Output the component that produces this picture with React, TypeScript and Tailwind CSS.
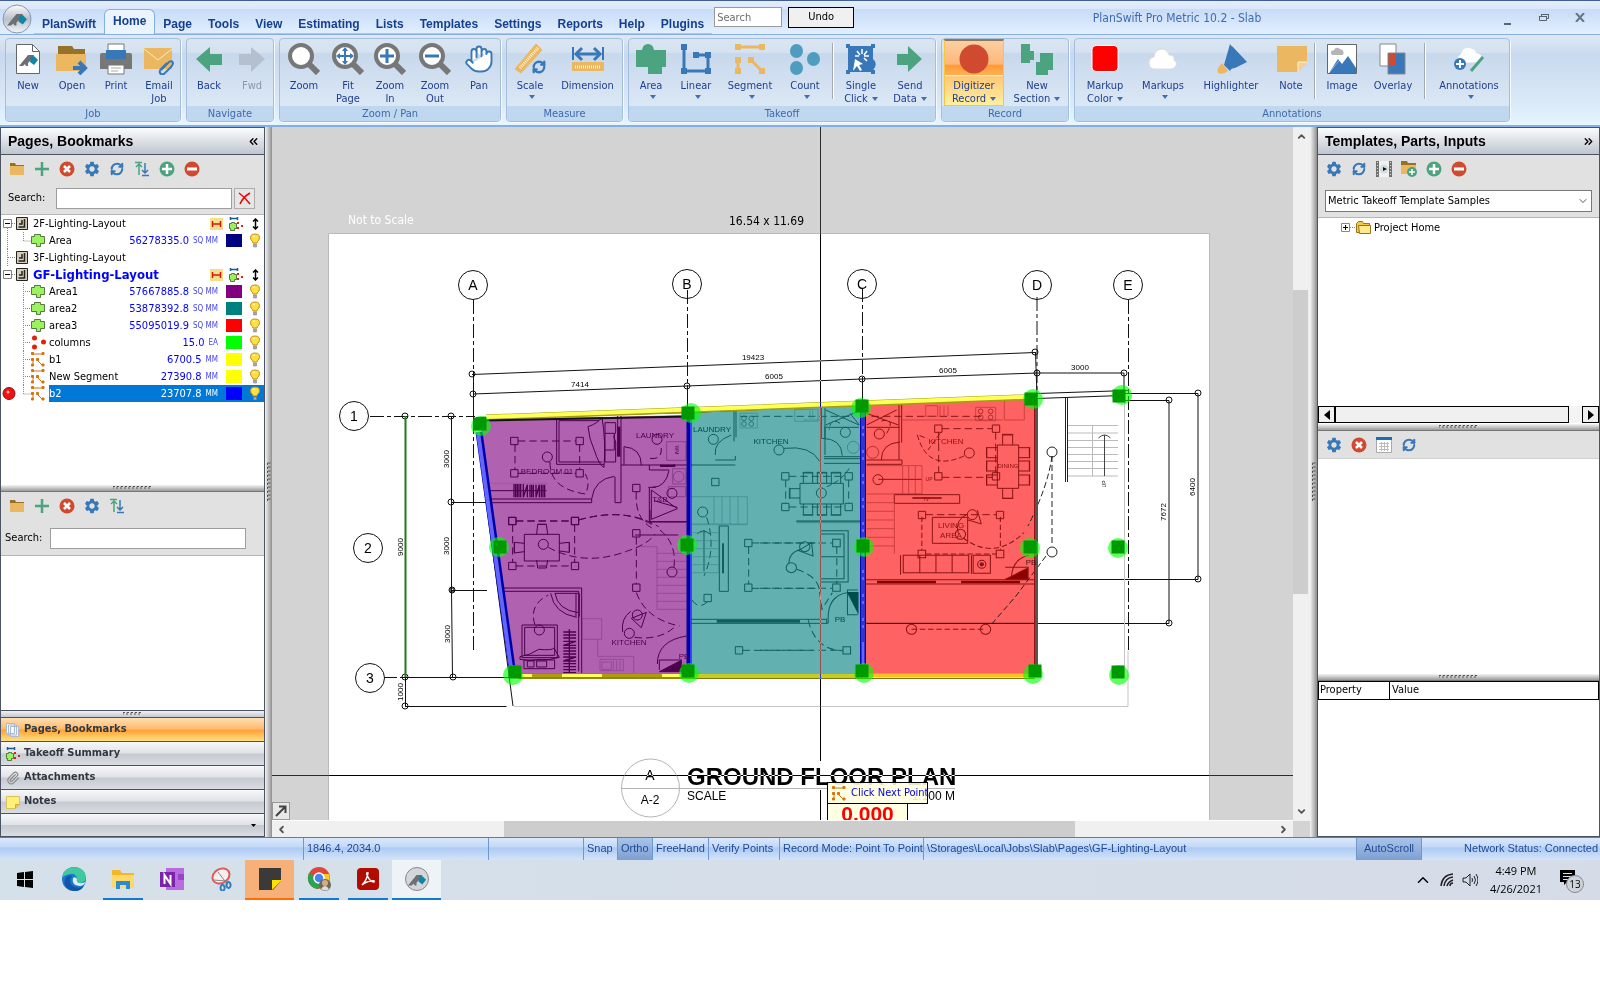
import { useState, type ReactNode } from 'react';
import { ChevronDown, ChevronLeft, ChevronRight, ChevronUp, ChevronsLeft, ChevronsRight, Hand, Paperclip, RefreshCw } from 'lucide-react';
import { MdSettings } from 'react-icons/md';
import clsx from 'clsx';

const BLUE = '#3878b8';
const GREEN = '#4ba37f';
const SAND = '#ebb761';
const GRAY = '#767776';
const RED = '#d04a30';

/* ---------- Ribbon icons ---------- */

const Logo = ({ x = 0, y = 0, s = 1 }: { x?: number; y?: number; s?: number }) => (
  <g transform={`translate(${x} ${y}) scale(${s})`}>
    <path d="M0 12 9 1h6l-1 3-5 5v3H7l-1-2-2 2z" fill="#6d6f72" />
    <path d="m15 2 4 4-4 5-4-3 1-5z" fill="#0e87a5" />
  </g>
);

const Lens = ({ children }: { children?: ReactNode }) => (
  <>
    <path d="m20 20 10 10" stroke={GRAY} strokeWidth="6" />
    <circle cx="13" cy="13" r="11" fill="#fff" stroke={GRAY} strokeWidth="4" />
    {children}
  </>
);

const ICONS: Record<string, ReactNode> = {
  New: (
    <>
      <path d="M4.500 1.500h16l7 7v22h-23z" fill="#fff" stroke="#666" />
      <path d="M20.500 1.500v7h7" fill="none" stroke="#666" />
      <Logo x={7} y={11} />
    </>
  ),
  Open: (
    <>
      <path d="M2 3h14l2 3h11v5H2z" fill="#957227" />
      <path d="M0 11h30v17H0z" fill={SAND} />
      <path d="M17 25h11m-5-6 6 6-6 6" fill="none" stroke={BLUE} strokeWidth="4" />
    </>
  ),
  Print: (
    <>
      <path d="M8 1h16v8H8z" fill="#fff" stroke={GRAY} />
      <path d="M0 12q0-2 2-2h28q2 0 2 2v14H0z" fill={GRAY} />
      <path d="M6 7h20v9H6z" fill={BLUE} />
      <path d="M8 22h16v9H8z" fill="#fff" stroke={GRAY} />
      <path d="M11 25h10m-10 3h7" stroke="#aaa" />
    </>
  ),
  'Email Job': (
    <>
      <path d="M1 5h28v21H1z" fill={SAND} />
      <path d="m1 6 14 11L29 6" fill="none" stroke="#fbe9ca" />
      <path d="m18 27 8-8q3-2 4 1 0 2-2 4l-7 7q-3 1-4-1-1-3 2-5l5-5" fill="none" stroke={BLUE} strokeWidth="2" />
    </>
  ),
  Back: <path d="M3 16 17 4v7h12v11H17v7z" fill={GREEN} />,
  Fwd: <path d="M29 16 15 4v7H3v11h12v7z" fill="#b4c0d0" />,
  Zoom: <Lens />,
  'Fit Page': (
    <Lens>
      <path d="M13 6v14M6 13h14" stroke={BLUE} strokeWidth="2" />
      <path d="m13 4 3 4h-6zm0 18 3-4h-6zM4 13l4-3v6zm18 0-4-3v6z" fill={BLUE} />
    </Lens>
  ),
  'Zoom In': (
    <Lens>
      <path d="M13 6v14M6 13h14" stroke={BLUE} strokeWidth="3" />
    </Lens>
  ),
  'Zoom Out': (
    <Lens>
      <path d="M6 13h14" stroke={BLUE} strokeWidth="3" />
    </Lens>
  ),
  Pan: <Hand width={30} height={32} x={1} fill="#fff" color={BLUE} strokeWidth={1.5} />,
  Scale: (
    <>
      <path d="M1 26 22 1l6 6L7 30z" fill={SAND} stroke={SAND} strokeLinejoin="round" />
      <path d="M6 25 24 5" stroke="#fff3d8" strokeWidth="3" strokeDasharray="1 1" />
      <RefreshCw x={18} y={17} width={14} height={14} color={BLUE} strokeWidth={4} />
    </>
  ),
  Dimension: (
    <>
      <path d="M1 4v13M31 4v13" stroke={BLUE} strokeWidth="2" />
      <path d="M6 11h20" stroke={BLUE} strokeWidth="3" />
      <path d="m10 5-6 6 6 6m12-12 6 6-6 6" fill="none" stroke={BLUE} strokeWidth="3" />
      <path d="M0 19h32v9H0z" fill={SAND} />
      <path d="M3 24h26" stroke="#fff3d8" strokeWidth="3" strokeDasharray="1 1" />
    </>
  ),
  Area: <path d="M1 7h6q1-6 6-6t6 6h12v17h-4v7H13v-7H1z" fill={GREEN} />,
  Linear: (
    <>
      <path d="M4 4v24h24V12H15" fill="none" stroke={BLUE} strokeWidth="3" />
      <path d="M1 1h6v6H1zM1 25h6v6H1zM25 25h6v6h-6zM25 9h6v6h-6zM13 9h6v6h-6z" fill={BLUE} />
    </>
  ),
  Segment: (
    <>
      <path d="M4 4h24M4 18v10M17 17l12 12" fill="none" stroke={SAND} strokeWidth="3" />
      <path d="M1 1h6v6H1zM25 1h6v6h-6zM1 14h6v6H1zM1 25h6v6H1zM14 14h6v6h-6zM25 25h6v6h-6z" fill={SAND} />
    </>
  ),
  Count: <path d="M14 8A6.500 7 0 1 1 1 8a6.500 7 0 1 1 13 0m0 17a6.500 7 0 1 1-13 0 6.500 7 0 1 1 13 0m17-9a6.500 7 0 1 1-13 0 6.500 7 0 1 1 13 0" fill="#4e9dc0" />,
  'Single Click': (
    <>
      <path d="M3 3h25v13q4 3 2 8l-3 5H3z" fill={BLUE} />
      <path d="M1 1h4v4H1zM26 1h4v4h-4zM1 27h4v4H1zM26 27h4v4h-4z" fill={BLUE} />
      <path d="m8 28 2-12 8 5-4 1 3 5-2 1-3-5z" fill="#fff" />
      <path d="M17 6v5m-5-3 3 4m7-4-3 4m5 1h-5m-9 0h4m5 2 3 3" stroke="#fff" strokeWidth="1.500" />
    </>
  ),
  'Send Data': <path d="M3 11h11V3l14 13-14 13v-7H3z" fill={GREEN} />,
  'Digitizer Record': <circle cx="16" cy="16" r="14.500" fill={RED} />,
  'New Section': (
    <>
      <path d="M0 1h9v7h4v9H9v3H0z" fill={GREEN} />
      <path d="M19 10h13v17h-5v5H15V19h4z" fill={GREEN} />
    </>
  ),
  'Markup Color': <rect x="3" y="2.500" width="26" height="26" rx="4" fill="#f00" stroke="#fff" />,
  Markups: <path d="M8 26q-6 0-6-6 0-5 5-6 1-8 8-8 5 0 7 6 6 0 5 5 4 3 2 6-2 3-5 3z" fill="#fff" stroke="#dcdcdc" />,
  Highlighter: (
    <>
      <path d="M15 1q1 2 3 3l14 15-12 6q-4 0-5 3l-6-6z" fill={BLUE} />
      <path d="m7 20 6 8q-5 4-10 2-2-4 4-10" fill={SAND} />
    </>
  ),
  Note: (
    <>
      <path d="M2 3h30v16l-9 10H2z" fill={SAND} />
      <path d="M23 29V19h9" fill="#f2d096" stroke="#fdf1dc" />
    </>
  ),
  Image: (
    <>
      <path d="M1.500 1.500h29v29h-29z" fill="#fff" stroke="#666" />
      <path d="M6 12q-3-4 2-5 2-4 6-1 5 1 3 6z" fill="#b5b5b5" />
      <path d="m3 30 9-14 4 5 6-8 8 12v5z" fill={BLUE} />
      <path d="m3 30 14-17" stroke="#fff" strokeOpacity=".4" />
    </>
  ),
  Overlay: (
    <>
      <path d="M3 1h16v22H3z" fill="#fff" stroke="#888" />
      <path d="M11 10h17v21H11z" fill={BLUE} stroke="#888" />
      <path d="M11.500 10.500h7v12h-7z" fill={RED} />
    </>
  ),
  Annotations: (
    <>
      <path d="M7 20q-5-5 1-9 3-9 11-5 3 0 4 4 8 1 5 9z" fill="#fff" />
      <path d="M30 14 18 28" stroke={GREEN} strokeWidth="3" />
      <circle cx="7" cy="21" r="6" fill={BLUE} />
      <path d="M7 17v8m-4-4h8" stroke="#fff" strokeWidth="2" />
    </>
  ),
};

type Tool = { id: string; w: string; lines?: string[]; menu?: boolean; off?: boolean; on?: boolean; sep?: boolean };

const GROUPS: { name: string; tools: Tool[] }[] = [
  {
    name: 'Job',
    tools: [
      { id: 'New', w: 'w-11' },
      { id: 'Open', w: 'w-11' },
      { id: 'Print', w: 'w-11' },
      { id: 'Email Job', w: 'w-[42px]', lines: ['Email', 'Job'] },
    ],
  },
  { name: 'Navigate', tools: [{ id: 'Back', w: 'w-11' }, { id: 'Fwd', w: 'w-[42px]', off: true }] },
  {
    name: 'Zoom / Pan',
    tools: [
      { id: 'Zoom', w: 'w-12' },
      { id: 'Fit Page', w: 'w-10', lines: ['Fit', 'Page'] },
      { id: 'Zoom In', w: 'w-11', lines: ['Zoom', 'In'] },
      { id: 'Zoom Out', w: 'w-[46px]', lines: ['Zoom', 'Out'] },
      { id: 'Pan', w: 'w-[42px]' },
    ],
  },
  { name: 'Measure', tools: [{ id: 'Scale', w: 'w-[46px]', menu: true }, { id: 'Dimension', w: 'w-[69px]' }] },
  {
    name: 'Takeoff',
    tools: [
      { id: 'Area', w: 'w-11', menu: true },
      { id: 'Linear', w: 'w-[46px]', menu: true },
      { id: 'Segment', w: 'w-[62px]', menu: true },
      { id: 'Count', w: 'w-12', menu: true },
      { id: 'Single Click', w: 'w-12', lines: ['Single', 'Click'], menu: true, sep: true },
      { id: 'Send Data', w: 'w-[50px]', lines: ['Send', 'Data'], menu: true },
    ],
  },
  {
    name: 'Record',
    tools: [
      { id: 'Digitizer Record', w: 'w-16', lines: ['Digitizer', 'Record'], menu: true, on: true },
      { id: 'New Section', w: 'w-[62px]', lines: ['New', 'Section'], menu: true },
    ],
  },
  {
    name: 'Annotations',
    tools: [
      { id: 'Markup Color', w: 'w-[60px]', lines: ['Markup', 'Color'], menu: true },
      { id: 'Markups', w: 'w-14', menu: true },
      { id: 'Highlighter', w: 'w-20' },
      { id: 'Note', w: 'w-10' },
      { id: 'Image', w: 'w-[46px]', sep: true },
      { id: 'Overlay', w: 'w-14' },
      { id: 'Annotations', w: 'w-20', menu: true, sep: true },
    ],
  },
];

const Caret = () => (
  <svg className="ml-1 inline-block" width="6" height="4" viewBox="0 0 6 4">
    <path d="M0 0h6L3 4z" fill="#3f6fae" />
  </svg>
);

function ToolButton({ tool }: { tool: Tool }) {
  const lines = tool.lines ?? [tool.id];
  return (
    <>
      {tool.sep && <div className="mx-[3px] mt-1 h-14 w-0.5 border-r border-white bg-[#a5aab2]" />}
      <div className={clsx('flex shrink-0 justify-center', tool.w)}>
        <button
          className={clsx(
            'flex h-[67px] flex-col items-center whitespace-nowrap text-[11px] leading-[13px]',
            tool.on
              ? 'w-[60px] border border-t-2 border-[#f7c63c] border-t-[#8e7a58] bg-[linear-gradient(#fbcfa2_0%,#fdb87a_36%,#ff9a35_38%,#ffb054_53%,#fff0c0_54%,#fdc878_56%,#fff0a0_100%)] pt-0.5'
              : 'w-full pt-1',
            tool.off ? 'text-[#8d97a6]' : 'text-[#1e3f8f]',
          )}
        >
          <svg width="32" height="32" viewBox="0 0 32 32" className="mb-1 shrink-0" aria-hidden>
            {ICONS[tool.id]}
          </svg>
          <span>{lines[0]}</span>
          {(lines[1] || tool.menu) && (
            <span className={clsx('flex items-center', !lines[1] && 'h-2.5')}>
              {lines[1]}
              {tool.menu && <Caret />}
            </span>
          )}
        </button>
      </div>
    </>
  );
}

const TABS = ['PlanSwift', 'Home', 'Page', 'Tools', 'View', 'Estimating', 'Lists', 'Templates', 'Settings', 'Reports', 'Help', 'Plugins'];

function Ribbon() {
  const [tab, setTab] = useState('Home');
  return (
    <header className="border-t border-[#3f5f94]">
      <div className="flex h-[33px] items-stretch bg-[linear-gradient(#e4edfb_0%,#dbe7fa_24%,#c8dcf7_26%,#e2efff_100%)]">
        <div className="flex w-[34px] items-end justify-center">
          <svg width="30" height="30" viewBox="0 0 30 30">
            <defs>
              <linearGradient id="orb" x2="0" y2="1">
                <stop offset="0" stopColor="#fdfdfe" />
                <stop offset=".5" stopColor="#b9c0cb" />
                <stop offset="1" stopColor="#f3f6fa" />
              </linearGradient>
            </defs>
            <circle cx="15" cy="15" r="14" fill="url(#orb)" stroke="#8496b5" />
            <Logo x={5} y={9} s={1.05} />
          </svg>
        </div>
        <nav className="flex items-end font-['Liberation_Sans',Arial,sans-serif] text-[12px] font-bold text-[#153f8f]">
          {TABS.map((t) => (
            <button
              key={t}
              onClick={() => setTab(t)}
              className={clsx(
                'px-2',
                t === tab ? 'h-[25px] rounded-t-md border border-b-0 border-[#7fb0ea] bg-[#eaf3fe] pb-0.5' : 'h-5 border-b border-[#a9c6ee]',
              )}
            >
              {t}
            </button>
          ))}
        </nav>
        <input aria-label="Search" placeholder="Search" className="ml-0.5 mt-1.5 h-5 w-[68px] rounded-none border border-[#9a9a9a] bg-white px-0.5 text-[11px] placeholder:text-[#6d6d6d]" />
        <button className="ml-1.5 mt-1.5 h-[21px] w-[66px] border border-black bg-[#f0f0f0] text-[11px] text-black">Undo</button>
        <h1 className="flex-1 self-center text-center text-[12px] text-[#3e6bb0]">PlanSwift Pro Metric 10.2 - Slab</h1>
        <div className="mr-3 flex items-center gap-5 text-[#586473]">
          <button aria-label="Minimize" className="flex h-4 w-4 items-end justify-center">
            <svg width="10" height="8"><path d="M1 5h7v2H1z" fill="#586473" /></svg>
          </button>
          <button aria-label="Restore" className="flex h-4 w-4 items-center justify-center">
            <svg width="10" height="9"><path d="M2.500 3V1.500h7v4H8M.5 3.500h7v4h-7z" fill="none" stroke="#586473" /><path d="M2 1h8v1H2zM0 3h8v1H0z" fill="#586473" /></svg>
          </button>
          <button aria-label="Close" className="flex h-4 w-4 items-center justify-center">
            <svg width="10" height="9"><path d="m1 0 8 9M9 0 1 9" stroke="#66758b" strokeWidth="2" /></svg>
          </button>
        </div>
      </div>
      <div className="flex gap-[5px] border-b-2 border-t border-[#86aee2] bg-[linear-gradient(#dfe9f5_0%,#c9d9ee_22%,#dcebf9_80%,#e4f6ff_100%)] px-[5px] pb-[3px] pt-[3px]">
        {GROUPS.map((g) => (
          <section key={g.name} className="rounded border border-[#a3bfdd] bg-[linear-gradient(#dae5f2_0%,#d6e2f0_16%,#c8d8ec_18%,#dae7f5_80%)] shadow-[1px_1px_0_#f3f9ff]">
            <div className="flex">
              {g.tools.map((t) => (
                <ToolButton key={t.id} tool={t} />
              ))}
            </div>
            <h2 className="h-[15px] rounded-b bg-[#c0d7f0] text-center text-[11px] leading-[15px] text-[#3e6aaa]">{g.name}</h2>
          </section>
        ))}
      </div>
    </header>
  );
}

/* ---------- Small toolbar icons ---------- */

type MiniName = 'folder' | 'plus' | 'delete' | 'gear' | 'sync' | 'sort' | 'add' | 'remove' | 'film' | 'folderAdd' | 'sheet';

const MINI: Record<MiniName, ReactNode> = {
  folder: (
    <>
      <path d="M1 2h5l1 2h8v3H1z" fill="#957227" />
      <path d="M1 5h14v9H1z" fill={SAND} />
    </>
  ),
  plus: <path d="M8 1v14M1 8h14" stroke={GREEN} strokeWidth="2.500" />,
  delete: (
    <>
      <circle cx="8" cy="8" r="7.500" fill={RED} />
      <path d="m5 5 6 6m0-6-6 6" stroke="#fff" strokeWidth="2.500" />
    </>
  ),
  gear: <MdSettings size={18} x={-1} y={-1} color={BLUE} />,
  sync: <RefreshCw width={14} height={14} x={1} y={1} color={BLUE} strokeWidth={3.5} />,
  sort: (
    <>
      <path d="M1 1.500h7M5 14V4M2 6l3-3 3 3" fill="none" stroke={GREEN} strokeWidth="1.500" />
      <path d="M8 14.500h7M11 2v10M8 9l3 3 3-3" fill="none" stroke={BLUE} strokeWidth="1.500" />
    </>
  ),
  add: (
    <>
      <circle cx="8" cy="8" r="7.500" fill={GREEN} />
      <path d="M8 3v10M3 8h10" stroke="#fff" strokeWidth="2.500" />
    </>
  ),
  remove: (
    <>
      <circle cx="8" cy="8" r="7.500" fill={RED} />
      <path d="M3 8h10" stroke="#fff" strokeWidth="3" />
    </>
  ),
  film: (
    <>
      <path d="M0 0h16v16H0z" fill="#707070" />
      <path d="M3 0h10v16H3z" fill="#f1f1f1" />
      <path d="M1.500 1v15m13-15v15" stroke="#ddd" strokeDasharray="1 2" />
      <circle cx="8" cy="8" r="4.500" fill="#d5dce0" />
      <path d="m7 6 4 2-4 2z" fill="#111" />
    </>
  ),
  folderAdd: (
    <>
      <path d="M0 0h6l1 2h8v2H0z" fill="#957227" />
      <path d="M0 4h15v9H0z" fill={SAND} />
      <circle cx="11" cy="11" r="5" fill={GREEN} />
      <path d="M11 8v6M8 11h6" stroke="#fff" strokeWidth="1.500" />
    </>
  ),
  sheet: (
    <>
      <path d="M.5.5h15v15H.5z" fill="#fff" stroke="#aaa" />
      <path d="M0 0h16v3H0z" fill="#1f6db5" />
      <path d="M3 6.500h10M3 9.500h10M3 12.500h10M5.500 5v9m3-9v9m3-9v9" stroke="#bbb" />
    </>
  ),
};

function MiniBar({ names }: { names: MiniName[] }) {
  return (
    <div className="flex h-[27px] items-center gap-[9px] px-2">
      {names.map((n) => (
        <button key={n} aria-label={n} className="h-4 w-4">
          <svg width="16" height="16" viewBox="0 0 16 16">{MINI[n]}</svg>
        </button>
      ))}
    </div>
  );
}

const Grip = ({ dots = 10 }: { dots?: number }) => (
  <svg width={dots * 4} height="4" className="block">
    {Array.from({ length: dots }, (_, i) => (
      <path key={i} d={`M${i * 4} 3V0.500h2`} fill="none" stroke="#555" />
    ))}
  </svg>
);

const HSplit = () => (
  <div className="flex h-[7px] shrink-0 items-center justify-center border-b border-[#777] bg-[linear-gradient(#f4f4f4,#9a9a9a)]">
    <Grip />
  </div>
);

const VSplit = () => (
  <div className="flex w-[7px] shrink-0 items-center justify-center bg-[linear-gradient(90deg,#f4f4f4,#8f8f8f)]">
    <svg width="4" height="40">
      {Array.from({ length: 10 }, (_, i) => (
        <path key={i} d={`M0.500 ${i * 4 + 3}v-2h3`} fill="none" stroke="#555" />
      ))}
    </svg>
  </div>
);

function PanelTitle({ title, children }: { title: string; children: ReactNode }) {
  return (
    <div className="flex h-7 shrink-0 items-center justify-between border-y border-[#4c5361] bg-[linear-gradient(#fbfcfd,#bfc5cf)] pl-[7px] pr-1">
      <h2 className="font-['Liberation_Sans',Arial,sans-serif] text-[14px] font-bold text-black">{title}</h2>
      <button aria-label={`Collapse ${title}`}>{children}</button>
    </div>
  );
}

/* ---------- Left tree ---------- */

const PageGlyph = () => (
  <>
    <path d="M15.500 2.500h11v12h-11z" fill="#d8cdb8" stroke="#222" />
    <path d="M23.500 4v8h-6M21 5v4h-3" fill="none" stroke="#222" strokeWidth="1.500" />
  </>
);
const AreaGlyph = () => <path d="M30.500 4.500h3v-2h6v2h4v7h-4v3h-4v-3h-5z" fill="#99f25e" stroke="#55793e" />;
const SegGlyph = ({ x = 30, y = 1 }) => (
  <g transform={`translate(${x} ${y})`} fill="#d8720c" stroke="#d8720c">
    <path d="M2 2h10M2 8v5m4-5 5 5" />
    <path d="M.5.5h2v2h-2zM11 .5h2v2h-2zM.5 6.500h2v2h-2zM.5 12h2v2h-2zM5.500 6.500h2v2h-2zM11 12h2v2h-2z" />
  </g>
);
const CountGlyph = () => <path d="M36 4a2.500 2.500 0 1 1-5 0 2.500 2.500 0 1 1 5 0m0 9a2.500 2.500 0 1 1-5 0 2.500 2.500 0 1 1 5 0m9-5a2.500 2.500 0 1 1-5 0 2.500 2.500 0 1 1 5 0" fill="#de2408" />;

const Bulb = () => (
  <svg width="12" height="15" viewBox="0 0 12 15">
    <path d="M4 10q0-2-2-3-2-6 4-6t4 6q-2 1-2 3z" fill="#ffe03c" stroke="#c58f16" />
    <path d="M4.500 11h3v3h-3z" fill="#aaa" stroke="#777" strokeWidth=".5" />
    <path d="M4 4q0-1 2-1" stroke="#fff" fill="none" />
  </svg>
);

const SummaryGlyph = () => (
  <svg width="14" height="14" viewBox="0 0 14 14">
    <path d="M1 1.500h8M1.500 0v3m7-3v3" stroke="#165b9a" strokeWidth="1.500" />
    <path d="M.5 6.500h2v-1h3v1h2v5h-2v2h-4v-2h-1z" fill="#99f25e" stroke="#55793e" />
    <path d="M8 5h2v2H8zM8 10h2v2H8zM12 8h2v2h-2z" fill="#de2408" />
  </svg>
);

type Row = { kind: 'page' | 'area' | 'count' | 'segment'; name: string; value?: string; unit?: string; color?: string; tools?: boolean; current?: boolean; last?: boolean; selected?: boolean };

const ROWS: Row[] = [
  { kind: 'page', name: '2F-Lighting-Layout', tools: true },
  { kind: 'area', name: 'Area', value: '56278335.0', unit: 'SQ MM', color: 'bg-[#000080]', last: true },
  { kind: 'page', name: '3F-Lighting-Layout' },
  { kind: 'page', name: 'GF-Lighting-Layout', tools: true, current: true },
  { kind: 'area', name: 'Area1', value: '57667885.8', unit: 'SQ MM', color: 'bg-[#800080]' },
  { kind: 'area', name: 'area2', value: '53878392.8', unit: 'SQ MM', color: 'bg-[#008080]' },
  { kind: 'area', name: 'area3', value: '55095019.9', unit: 'SQ MM', color: 'bg-[#ff0000]' },
  { kind: 'count', name: 'columns', value: '15.0', unit: 'EA', color: 'bg-[#00ff00]' },
  { kind: 'segment', name: 'b1', value: '6700.5', unit: 'MM', color: 'bg-[#ffff00]' },
  { kind: 'segment', name: 'New Segment', value: '27390.8', unit: 'MM', color: 'bg-[#ffff00]' },
  { kind: 'segment', name: 'b2', value: '23707.8', unit: 'MM', color: 'bg-[#0000ff]', last: true, selected: true },
];

function TreeRow({ row, index }: { row: Row; index: number }) {
  const page = row.kind === 'page';
  return (
    <li className="flex h-[17px] items-center text-[11px] leading-[17px] text-black">
      <svg width={page ? 32 : 48} height="17" className="shrink-0">
        <g stroke="#888" strokeDasharray="1 1">
          {index < 3 && <path d={index === 0 ? 'M6.500 9v8' : 'M6.500 0v17'} />}
          {page ? <path d="M7 8.500h8" /> : <path d={row.last ? 'M22.500 0v9h8' : 'M22.500 0v17M22 8.500h8'} fill="none" />}
        </g>
        {page && row.tools && (
          <>
            <path d="M2.500 4.500h8v8h-8z" fill="#fff" stroke="#808080" />
            <path d="M4 8.500h5" stroke="#000" />
          </>
        )}
        {row.kind === 'page' && <PageGlyph />}
        {row.kind === 'area' && <AreaGlyph />}
        {row.kind === 'count' && <CountGlyph />}
        {row.kind === 'segment' && <SegGlyph />}
        {row.selected && (
          <>
            <circle cx="8" cy="8.500" r="6" fill="#f01010" stroke="#901010" />
            <circle cx="7" cy="7" r="1.500" fill="#ffb0b0" />
          </>
        )}
      </svg>
      <button
        className={clsx(
          'flex h-full min-w-0 flex-1 items-center justify-between pr-[3px] text-left',
          row.selected && 'bg-[#0078d7] text-white',
        )}
      >
        <span className={row.current ? 'whitespace-nowrap text-[13px] font-bold text-[#0000ff]' : 'whitespace-nowrap'}>{row.name}</span>
        {row.value && (
          <span className="flex items-center">
            <span className={row.selected ? 'text-white' : 'text-[#0000ff]'}>{row.value}</span>
            <span className={clsx('ml-1 text-[8px]', row.selected ? 'text-white' : 'text-[#4444ff]')}>{row.unit}</span>
            <i className={clsx('ml-2 h-[13px] w-4', row.color)} />
            <span className="ml-[7px]"><Bulb /></span>
          </span>
        )}
        {row.tools && (
          <span className="flex items-center gap-1.5">
            <svg width="13" height="12"><path d="M0 0h13v12H0z" fill="#f5df8a" /><path d="M2.500 3v6m8-6v6m-8-3h8" stroke="#d41a10" strokeWidth="1.500" /></svg>
            <SummaryGlyph />
            <svg width="12" height="12"><path d="M6.500 1v10M4 3.500 6.500 1 9 3.500M4 8.500 6.500 11 9 8.500" stroke="#000" fill="none" strokeWidth="1.500" /></svg>
          </span>
        )}
      </button>
    </li>
  );
}

const SECTIONS = [
  {
    name: 'Pages, Bookmarks',
    icon: (
      <svg width="14" height="14"><path d="M4.500 3.500h8v10h-8zM2.500 2h8v10h-8zM.5.5h8v10h-8z" fill="#f4f9ff" stroke="#a9bad2" /></svg>
    ),
  },
  { name: 'Takeoff Summary', icon: <SummaryGlyph /> },
  { name: 'Attachments', icon: <Paperclip size={14} color="#8a8a8a" /> },
  {
    name: 'Notes',
    icon: (
      <svg width="14" height="14"><path d="M.5 1.500h13v8l-4 4h-9z" fill="#fff07a" stroke="#d9c255" /><path d="M9.500 13.500v-4h4" fill="#f2c33c" stroke="#d9a935" /></svg>
    ),
  },
];

function LeftPanel() {
  const [section, setSection] = useState('Pages, Bookmarks');
  return (
    <aside className="flex w-[265px] shrink-0 flex-col border-x border-[#4c5361] bg-white">
      <PanelTitle title="Pages, Bookmarks">
        <ChevronsLeft size={13} strokeWidth={2.5} />
      </PanelTitle>
      <div className="border-b border-[#b5b5b5] bg-[#e1e1e1]">
        <MiniBar names={['folder', 'plus', 'delete', 'gear', 'sync', 'sort', 'add', 'remove']} />
        <div className="flex h-8 items-center pl-[7px] pr-[9px] text-[11px]">
          <label htmlFor="page-search" className="w-12">Search:</label>
          <input id="page-search" className="h-[21px] min-w-0 flex-1 rounded-none border border-[#9d9d9d] bg-white px-1" />
          <button aria-label="Clear search" className="ml-0.5 flex h-[21px] w-[21px] items-center justify-center border border-[#adadad] bg-[#e6e6e6]">
            <svg width="14" height="13"><path d="M1 1q6 4 11 11M12 1Q5 5 2 12" fill="none" stroke="#f00000" strokeWidth="1.500" /></svg>
          </button>
        </div>
      </div>
      <ul className="h-[270px]">
        {ROWS.map((row, i) => (
          <TreeRow key={row.name} row={row} index={i} />
        ))}
      </ul>
      <HSplit />
      <div className="border-b border-[#b5b5b5] bg-[#e1e1e1]">
        <MiniBar names={['folder', 'plus', 'delete', 'gear', 'sort']} />
        <div className="flex h-9 items-center pl-1 pr-[18px] pt-0.5 text-[11px]">
          <label htmlFor="bookmark-search" className="w-[45px]">Search:</label>
          <input id="bookmark-search" className="h-[21px] min-w-0 flex-1 rounded-none border border-[#9d9d9d] bg-white px-1" />
        </div>
      </div>
      <div className="flex-1" />
      <div className="flex h-2 items-center justify-center border-y border-[#4c5361] bg-[linear-gradient(#f0f1f4,#c4c8d0)]">
        <Grip dots={5} />
      </div>
      {SECTIONS.map((s) => (
        <button
          key={s.name}
          onClick={() => setSection(s.name)}
          className={clsx(
            'flex h-6 items-center gap-1 border-b border-[#4c5361] px-1 text-[11px] font-bold text-[#32383f]',
            section === s.name
              ? 'bg-[linear-gradient(#fedfb5_0%,#ffba6b_48%,#ffa135_52%,#ffe080_100%)]'
              : 'bg-[linear-gradient(#f7f8fa_0%,#e0e2e7_48%,#c5c9d0_52%,#dadde2_100%)]',
          )}
        >
          <span className="flex w-[15px] justify-center">{s.icon}</span>
          {s.name}
        </button>
      ))}
      <div className="flex h-[23px] items-center justify-end border-b border-[#4c5361] bg-[linear-gradient(#f7f8fa_0%,#e0e2e7_48%,#c5c9d0_52%,#dadde2_100%)] pr-2">
        <button aria-label="Configure buttons">
          <svg width="5" height="3"><path d="M0 0h5L2.500 3z" /></svg>
        </button>
      </div>
    </aside>
  );
}

/* ---------- Floor plan ---------- */

const sq = (pts: number[][], s = 22) => pts.map(([x, y]) => `M${x - s / 2} ${y - s / 2}h${s}v${s}h-${s}z`).join('');
const ring = (pts: number[][], r: number) => pts.map(([x, y]) => `M${x - r} ${y}a${r} ${r} 0 1 0 ${2 * r} 0a${r} ${r} 0 1 0 -${2 * r} 0`).join('');

const BUBBLES: [string, number, number][] = [
  ['A', 473, 285], ['B', 687, 284], ['C', 862, 284], ['D', 1037, 285], ['E', 1128, 285], ['1', 354, 416], ['2', 368, 548], ['3', 370, 678],
];

const DIMS: [string, number, number, boolean][] = [
  ['19423', 753, 360, false], ['7414', 580, 387, false], ['6005', 774, 379, false], ['6005', 948, 373, false], ['3000', 1080, 370, false],
  ['9000', 403, 547, true], ['3000', 449, 459, true], ['3000', 449, 546, true], ['3000', 450, 634, true], ['1000', 403, 692, true],
  ['6400', 1195, 487, true], ['7672', 1166, 512, true],
];

const COLUMNS = [
  [481, 426, 480, 424], [691, 413, 688, 413], [861, 408, 862, 406], [1033, 399, 1031, 399], [1122, 395, 1119, 396],
  [499, 547, 500, 547], [687, 545, 687, 545], [864, 547, 863, 546], [1030, 548, 1030, 547], [1118, 548, 1118, 547],
  [513, 675, 515, 672], [689, 673, 688, 671], [864, 673, 862, 671], [1033, 674, 1035, 671], [1119, 675, 1118, 672],
];

const ROOM_TEXT: [string, number, number, string, number?][] = [
  ['BEDROOM 01', 547, 474, '#4d004d'], ['LAUNDRY', 655, 438, '#4d004d'], ['T&B', 660, 502, '#4d004d'], ['KITCHEN', 629, 645, '#4d004d'], ['PB', 684, 659, '#4d004d'],
  ['LAUNDRY', 712, 432, '#004d4d'], ['KITCHEN', 771, 444, '#004d4d'], ['PB', 840, 622, '#004d4d'],
  ['KITCHEN', 946, 444, '#8c1010'], ['DINING', 1008, 468, '#8c1010', 6], ['LIVING', 951, 528, '#8c1010'], ['AREA', 951, 538, '#8c1010'],
  ['UP', 929, 481, '#8c1010', 5], ['TV', 926, 501, '#8c1010', 5], ['PB', 1031, 565, '#4d1010'],
];

function FloorPlan() {
  return (
    <svg
      className="block h-[693px] w-full bg-[#d3d3d3] font-['Liberation_Sans',Arial,sans-serif]"
      viewBox="272 127 1021 693"
      preserveAspectRatio="xMidYMin slice"
      role="img"
      aria-label="Ground floor plan"
    >
      <path d="M328.500 233.500h881v600h-881z" fill="#fff" stroke="#bababa" />

      {/* takeoff areas */}
      <path d="M480 420 689 415V676H516z" fill="#b062b0" />
      <path d="M689 412 863 404V676H689z" fill="#62b0b0" />
      <path d="M863 404 1037 398V676H863z" fill="#ff6262" />

      {/* purple unit, upper half */}
      <g transform="translate(320 200) scale(.33333)" fill="none" stroke="#4d004d" strokeWidth="3">
        <path d="M893 648V770M903 648V908M885 830V908H903M903 795H1020M1060 795H1100M510 897H815V908H510" />
        <path d="M1020 797h46" strokeWidth="8" />
        <path d="M897 680v90" strokeWidth="8" />
        <path d="M710 655v138h142M717 662v124h130M855 668h32v28l-6 14 6 16v60h-32zM855 700h28v50h-28" />
        <path d="M710 655h136M717 662h120M804 680q4 40 18 68 16 50 30 54 6-80-6-150-12 18-42 28z" />
        <path d={sq([[583, 723], [779, 723], [583, 820], [779, 820], [949, 864], [577, 963], [765, 963]])} />
        <path d={ring([[682, 771], [1011, 718]], 15)} />
        <path d="M690 786q-2 80 106 96q16-30 0-60M990 775q40 6 33-40M949 876q-6 80 50 110M776 960q140-40 240 20" strokeDasharray="22 12" />
        <path d="M594 723h174M585 734v75M779 734v75M594 820h174M588 963h166" strokeDasharray="22 12" />
        <path d="M815 897q8-60 68-68M912 740q52 4 52 56M912 740v54M1047 812q-10 50-50 50M988 795v15h60" />
        <path d="M988 862v104h112M994 870v88l78-32zM1002 902l70 20M985 862h22" />
        <path d="M1040 725h58v56h-58zM1045 860h52v30h-52zM1058 806h40v46h-40z" stroke="#8b3f8b" />
        <path d={ring([[1076, 830]], 16)} stroke="#8b3f8b" />
        <path d={ring([[1056, 880]], 15)} />
        <path d="M510 872h170" />
        <path d="M512 850h170" stroke="#9a559a" strokeWidth="2" />
        <path d="M582 852v40m5-40v40m5-40v40m5-40v40m5-40v40m8-40v40l12-38v38m8-38v38m5-38v38m5-38v38m8-38v38l10-38v38m6-38v38m5-38v38m5-38v38" strokeWidth="4" />
      </g>
      {/* purple unit, lower half */}
      <g transform="translate(320 510) scale(.33333)" fill="none" stroke="#4d004d" strokeWidth="3">
        <path d={sq([[577, 33], [765, 33], [577, 168], [765, 168], [949, 70], [949, 233]])} />
        <path d="M588 33h166M578 44v113M764 44v113M588 168h166M949 82v140" strokeDasharray="22 12" />
        <path d="M613 73h105v80H613zM650 73l3-30h26l4 30M613 100l-30-3v32l30-4M718 100l30-3v30l-30-4M650 150l3 24h26l4-24M653 43h26M583 97v32M748 97v30" />
        <path d={ring([[670, 103], [1056, 186], [952, 315], [928, 370], [658, 360]], 15)} />
        <path d="M685 112q110 60 240 10 60-20 80-50M776 30q140-40 230 20M949 248q30 80 130 100M944 382q80 10 125-36M1020 60q50 40 42 110M645 345q-20-60 40-90" strokeDasharray="22 12" />
        <path d="M945 75h130M990 0v35h110M550 234h235v255M550 244h226v240M705 250h70M692 250q10 60 78 72M705 250q8 50 70 58M768 250v70M778 250v70" />
        <path d="M963 110h48v188h89M1011 130h89m-89 24h89m-89 24h89m-89 24h89m-89 24h89m-89 24h89m-89 24h89" stroke="#8b3f8b" strokeWidth="2" />
        <path d="M606 345h106v98H606zM614 352h90v84h-90zM612 450h92v26h-92zM622 453h20v18h-20zM650 453h30v18h-30z" />
        <path d="M600 440q30-4 56-22 40 4 46-4l16 28q-30 10-60 6-30 8-58 0z" />
        <path d="M730 366h38m-38 9h38m-38 9h38m-38 10h38l-38 12h38m-38 8h38m-38 9h38m-38 9h38m-38 9h38l-38 12h38m-38 8h38m-38 9h38m-38 9h38m-38 9h38M748 358v130" strokeWidth="4" />
        <path d="M787 326h58v62h-58zM833 388v51h108v50M840 448h70v34h-70zM846 456h28v22h-28zM880 452v28m10-28v28m10-28v28" stroke="#8b3f8b" strokeWidth="2" />
        <path d="M908 366q-6-40 24-62M934 325l30 28 15-46z" />
        <path d="M1012 462q0-70 88-84M1018 450h68M1018 450v30M1108 378v80" />
        <path d="M1018 485l66-34v34z" fill="#4d004d" />
      </g>

      {/* teal unit, upper half */}
      <g transform="translate(740 200) scale(.33333)" fill="none" stroke="#125f5f" strokeWidth="3">
        <path d={sq([[136, 829], [326, 829], [136, 921], [326, 921]])} />
        <path d="M147 829h168M137 840v70M326 840v70M147 921h168M0 649h340" strokeDasharray="22 12" />
        <path d="M-12 632v80M-18 632v92M-74 765q-6-40 48-60M-74 780h60v-12M-14 795h-134" />
        <path d="M244 618V715M255 618V715M252 770h108M252 776h108M252 790h108M257 630l100 45M257 675l100-42M257 682h100M330 640l28 35" />
        <path d={ring([[117, 750], [316, 697], [-80, 718]], 15)} />
        <path d={ring([[12, 655], [12, 672], [34, 655], [34, 672]], 7)} strokeWidth="2" />
        <path d="M0 640h52v44H0zM164 628h70v36h-70zM190 660h60M210 632v24m8-24v24" stroke="#3d8c8c" strokeWidth="2" />
        <path d="M132 745q80-10 108 40M245 715q60 0 62 52M255 765V680" />
        <path d="M300 670q-30-20-32 20M260 860q50-20 70-60" strokeDasharray="16 8" />
        <path d={ring([[340, 742]], 18)} stroke="#3d8c8c" />
        <path d="M180 850h130v62H180zM190 850v-33h28v33M232 850v-33h28v33M274 850v-33h28v33M190 912v33h28v-33M232 912v33h28v-33M274 912v33h28v-33M180 866h-30v28h30M148 863v34M188 819h32m10 0h32m10 0h32M188 945h32m10 0h32m10 0h32" />
        <path d={ring([[244, 879]], 15)} />
        <path d="M170 962h190M170 968h190" stroke="#3d8c8c" />
        <path d="M-150 890h172M-54 890v82M-30 890v82M-6 890v82M-78 890v82M-150 972H22V890" stroke="#3d8c8c" strokeWidth="2" />
        <path d={sq([[-74, 846]])} />
        <path d={ring([[-112, 936]], 15)} />
      </g>
      {/* teal unit, lower half */}
      <g transform="translate(320 510) scale(.33333)" fill="none" stroke="#125f5f" strokeWidth="3">
        <path d={sq([[1285, 99], [1285, 233], [1163, 264], [1257, 421]])} />
        <path d="M1286 110v112M1296 99h190M1296 235h190M1268 421h210M1160 22q30 90-8 176M1116 270q20 30 46 6" strokeDasharray="22 12" />
        <path d="M1198 48h27v196h-27zM1152 60v124M1132 72q16-18 38 0" />
        <path d="M1209 100v90" strokeWidth="6" />
        <path d="M1118 44h165M1118 68h78m-78 24h78m-78 24h78m-78 24h78m-78 24h78m-78 24h78M1196 44v144" stroke="#3d8c8c" strokeWidth="2" />
        <path d="M1114 328h406M1114 340h410M1520 326v14" />
        <path d="M1190 334h250" strokeWidth="8" />
      </g>
      <g transform="translate(760 510) scale(.34435 .33333)" fill="none" stroke="#125f5f" strokeWidth="3">
        <path d={sq([[222, 99], [222, 233], [252, 421]])} />
        <path d="M0 99h210M0 235h210M0 421h240M223 110v112M140 330q20 90 100 92M106 178q60 20 66 60l8 60 30-50" strokeDasharray="22 12" />
        <path d={ring([[130, 110], [91, 173]], 15)} />
        <path d="M118 118q-34 10-34 42M112 122l38-24 4 40z" />
        <path d="M176 62h80v154h-80M176 72h68v134h-68M176 140h68" />
        <path d="M198 328q-2-70 54-80M198 328v12M105 34h190M284 240h-30v74h30" />
        <path d="M252 246h34v68z" fill="#004d4d" stroke="none" />
      </g>

      {/* red unit */}
      <g transform="translate(740 200) scale(.33333)" fill="none" stroke="#8c1414" strokeWidth="3">
        <path d={sq([[595, 686], [768, 686], [595, 829], [768, 829], [546, 945], [780, 945]])} />
        <path d="M606 686h150M596 697v120M767 697v120M606 832h150M557 944h212M395 649h340" strokeDasharray="22 12" />
        <path d="M477 600V780M485 600V728M380 780h106v13H380M424 780q0-50 56-54M380 640l95 35M380 675l90-45M380 682h98" />
        <path d={ring([[418, 702], [688, 759], [414, 839], [697, 944]], 15)} />
        <path d="M672 768q-110 50-140-64l30 12M440 700q30-50-20-36M600 700l-36 50" strokeDasharray="16 8" />
        <path d="M772 735h64v130h-64zM788 735v-30h30v30M788 865v30h30v-30M772 743h-32v30h32M772 783h-32v30h32M772 825h-32v30h32M836 743h32v30h-32M836 783h32v30h-32M836 825h32v30h-32M786 703h34M786 895h34M740 741v34m0 6v34m0 8v34M869 741v34m0 6v34m0 8v34" />
        <path d="M463 884h196v26H463zM415 838h130" />
        <path d="M517 894h88" strokeWidth="5" />
        <path d="M707 622h60v40h-60zM557 617h36v32h-36zM600 617v32m12-32v32m12-32v32M793 600v60h60v-60M488 660h300" stroke="#b83030" strokeWidth="2" />
        <path d={ring([[722, 634], [752, 634], [722, 652], [752, 652]], 7)} strokeWidth="2" />
        <path d="M380 797h166v84h-83v180M488 797v84m18-84v84m20-84v84M380 882h83m-83 26h83m-83 26h83m-83 26h83m-83 26h83m-83 26h83m-83 26h83" stroke="#b83030" strokeWidth="2" />
        <path d={ring([[398, 757]], 18)} stroke="#b83030" />
        <path d="M577 952h106v78H577zM655 1000q-12-40 28-58M712 930l12 42-40-12" />
      </g>
      <g transform="translate(760 510) scale(.34435 .33333)" fill="none" stroke="#8c1414" strokeWidth="3">
        <path d={sq([[470, 132], [697, 132]])} />
        <path d="M470 20v100M698 20v100M482 132h204M590 84q90 70 176-16M440 358h214" strokeDasharray="16 8" />
        <path d={ring([[582, 73], [440, 358], [655, 358]], 15)} />
        <path d="M408 136v58M416 136h190v52H416zM464 136v52M511 136v52M558 136v52M614 136v56M619 136h50v54h-50z" />
        <path d={ring([[644, 163]], 12)} />
        <path d={ring([[644, 163]], 5)} fill="#8c1414" />
        <path d="M306 209h490M306 222h490" />
        <path d="M340 216h171M584 216h171" stroke="#8c0000" strokeWidth="7" />
        <path d="M306 340h490M712 172h66v36h-66M730 208q0-60 50-72" />
        <path d="M712 208l66-34v34z" fill="#8c0000" />
      </g>

      {/* balcony lights and stairs right of the red unit */}
      <g fill="none" stroke="#222">
        <path d="M1052 456v90M1052 456q-4 30-24 70M1046 556l-30 40-26 30" strokeDasharray="6 3" />
        <path d={ring([[1052, 452], [1052, 552]], 5)} />
        <path d="M1065.500 397v85M1067.500 397v85" />
        <path d="M1068 425.500h50m-50 7.500h50m-50 7.500h50m-50 7h50m-50 7h50m-50 7h50m-50 7h50m-50 7.500h50M1092.500 425v51" stroke="#bbb" />
        <path d="M1104.500 476v-41m-6 3q6-6 12 0" stroke="#444" />
      </g>

      {/* grid, walls, dimensions */}
      <g fill="none" stroke="#111">
        <path d="M473.500 300v351M687.500 290v120M862.500 288v115M1037 297v100M1128.500 300v351M370 416.500h105" strokeDasharray="14 3 4 3" />
        <path d="M473.500 374v46M862.500 560v100M687.500 385v25M862.500 378v24M1035.500 352l1.500 45" />
        <path d="m472 374.500 563-22M473 394l214-8 175-7 175-6h87v24M1037 393.500l91-3M1037 398.500l85-3M1120 393.500h78v186M1140 400.500h29v223M1124 400.500h45M1040 579.500h158M867 623.500h302" />
        <path d="M451.500 416v174l1 87M451 502.500h36M452 590.500h35M385 677.500h12M400 677.500h114M405.500 706.500h101M405.500 677v30M478 440l35 266" />
        <path d={ring([[472, 374], [473, 394], [687, 386], [862, 379], [1035, 352], [1037, 373], [1124, 373], [1198, 393], [1169, 400], [1198, 579], [1169, 623], [451, 416], [451, 502], [452, 590], [453, 677], [405, 416], [405, 677], [405, 706]], 3)} />
        <path d={ring([[452, 590]], 2)} />
        <path d="M514 706.500h614V651M1124.500 397v280" stroke="#c4c4c4" />
        <path d="M476 418 689 412 1037 397" strokeWidth="2" />
      </g>
      <path d="M405.500 416v261" stroke="#1e7a1e" strokeWidth="2" />
      <path d="M1036.500 398v276" stroke="#555" strokeWidth="3" />
      <path d="M1034.500 398v276" stroke="#9a1010" />

      {/* linear takeoffs */}
      <path d="M486 417.500 690 410 1033 397" fill="none" stroke="#a0a010" strokeWidth="6" />
      <path d="M486 417 690 409.500 1033 396.500" fill="none" stroke="#ffff5c" strokeWidth="4" />
      <path d="M486 420.500 689 416.500" stroke="#111" strokeWidth="2" />
      <path d="M518 676h172" stroke="#8a8a10" strokeWidth="6" />
      <path d="M518 675.500h14m30 0h40m60 0h28" stroke="#ffff5c" strokeWidth="3" />
      <path d="M532 675.500h30m40 0h60" stroke="#b09a10" strokeWidth="3" />
      <path d="M690 676h173" stroke="#c8cc20" strokeWidth="4" />
      <path d="M690 678.500h345" stroke="#7a7a10" />
      <path d="M863 675.500h170" stroke="#ffc020" strokeWidth="4" />
      <path d="M479 432 512 668" stroke="#0000a8" strokeWidth="7" />
      <path d="M478 432 511 668" stroke="#6464ff" strokeWidth="4" />
      <path d="M689 418v248" stroke="#0000a8" strokeWidth="5" />
      <path d="M690.500 418v248" stroke="#3a3aff" />
      <path d="M863 412v254" stroke="#0000a8" strokeWidth="6" />
      <path d="M863 412v254" stroke="#6464ff" strokeWidth="3" />
      <path d="M863 412v230" stroke="#0000a8" strokeDasharray="14 3 4 3" />

      {COLUMNS.map(([cx, cy, x, y]) => (
        <g key={`${cx}-${cy}`}>
          <circle cx={cx} cy={cy} r="10" fill="#00ff00" fillOpacity=".62" />
          <path d={sq([[x, y]], 13)} fill="#009900" />
        </g>
      ))}

      {BUBBLES.map(([t, x, y]) => (
        <g key={t}>
          <circle cx={x} cy={y} r="14.500" fill="none" stroke="#111" />
          <text x={x} y={y + 5} textAnchor="middle" fontSize="14">{t}</text>
        </g>
      ))}
      {DIMS.map(([t, x, y, up]) => (
        <text key={`${x}-${y}`} x={x} y={y} textAnchor="middle" fontSize="8" transform={up ? `rotate(-90 ${x} ${y})` : undefined}>{t}</text>
      ))}
      {ROOM_TEXT.map(([t, x, y, fill, size]) => (
        <text key={`${t}-${x}`} x={x} y={y} textAnchor="middle" fontSize={size ?? 8} fill={fill}>{t}</text>
      ))}
      <text x="675" y="450" fontSize="5" textAnchor="middle" fill="#4d004d" transform="rotate(90 675 450)">WM</text>
      <text x="1106" y="484" fontSize="5" textAnchor="middle" transform="rotate(-90 1106 484)">UP</text>

      {/* drawing title */}
      <g fill="none" stroke="#b5b5b5">
        <circle cx="650.500" cy="788" r="29" />
        <path d="M622 788.500h333" />
      </g>
      <text x="650" y="780" textAnchor="middle" fontSize="14">A</text>
      <text x="650" y="804" textAnchor="middle" fontSize="12">A-2</text>
      <text x="687" y="785" fontSize="24" fontWeight="bold">GROUND FLOOR PLAN</text>
      <text x="687" y="800" fontSize="12">SCALE</text>
      <text x="955" y="800" fontSize="12" textAnchor="end">1:100 M</text>

      <g className="font-['DejaVu_Sans_Condensed','Noto_Sans',sans-serif]" fontSize="12">
        <text x="348" y="224" fill="#fff">Not to Scale</text>
        <text x="729" y="225">16.54 x 11.69</text>
      </g>

      {/* crosshair inverts whatever is under it */}
      <path className="mix-blend-difference" d="M820.500 127v634M820.500 790v30M272 775.500h1021" stroke="#fff" />
    </svg>
  );
}

function Canvas() {
  return (
    <main className="flex min-w-0 flex-1">
      <div className="min-w-0 flex-1">
        <div className="relative overflow-hidden">
          <FloorPlan />
          <div className="absolute left-[555px] top-[655px] w-[101px] border border-black bg-[#ffffe1]/90 text-[11px] leading-5 text-[#0000e0]">
            <div className="flex items-center gap-1 whitespace-nowrap pl-1">
              <svg width="15" height="15" className="shrink-0"><SegGlyph x={0} y={0} /></svg>
              Click Next Point
            </div>
          </div>
          <output className="absolute left-[555px] top-[676px] block h-6 w-[81px] border border-black bg-[#ffffe1] text-center font-['Liberation_Sans',Arial,sans-serif] text-[21px] font-bold leading-5 text-[#f00]">
            0.000
          </output>
          <button aria-label="Overview" className="absolute bottom-0 left-0 flex h-[18px] w-[18px] items-center justify-center border border-[#999] bg-[#e8e8e8]">
            <svg width="12" height="12"><path d="M1 11 10 2M4 1.500h6.500V8" fill="none" stroke="#444" strokeWidth="2" /></svg>
          </button>
        </div>
        <div className="flex h-[17px] items-center justify-between border-t border-white bg-[#f0f0f0] px-1 text-[#555]">
          <button aria-label="Scroll left"><ChevronLeft size={11} strokeWidth={4} /></button>
          <div className="flex h-full flex-1 px-[217px] pr-[203px]">
            <div className="h-full flex-1 bg-[#cdcdcd]" />
          </div>
          <button aria-label="Scroll right"><ChevronRight size={11} strokeWidth={4} /></button>
        </div>
      </div>
      <div className="mb-4 flex w-[17px] flex-col items-center justify-between bg-[#f0f0f0] py-1 text-[#555]">
        <button aria-label="Scroll up"><ChevronUp size={11} strokeWidth={4} /></button>
        <div className="flex w-full flex-1 flex-col pb-[212px] pr-0.5 pt-[148px]">
          <div className="w-full flex-1 bg-[#cdcdcd]" />
        </div>
        <button aria-label="Scroll down"><ChevronDown size={11} strokeWidth={4} /></button>
      </div>
    </main>
  );
}

/* ---------- Right panel ---------- */

function RightPanel() {
  return (
    <aside className="flex w-[283px] shrink-0 flex-col border-x border-b border-[#4c5361] bg-white text-[11px]">
      <PanelTitle title="Templates, Parts, Inputs">
        <ChevronsRight size={13} strokeWidth={2.5} />
      </PanelTitle>
      <div className="border-b border-[#b5b5b5] bg-[#e1e1e1]">
        <MiniBar names={['gear', 'sync', 'film', 'folderAdd', 'add', 'remove']} />
        <div className="relative px-[7px] pb-[5px] pt-2">
          <select aria-label="Template set" className="h-[22px] w-full appearance-none rounded-none border border-[#7a7a7a] bg-white px-0.5 text-black">
            <option>Metric Takeoff Template Samples</option>
          </select>
          <ChevronDown size={12} className="pointer-events-none absolute right-2.5 top-[13px] text-[#555]" />
        </div>
      </div>
      <div className="flex h-[188px] items-start">
        <button className="flex items-center pl-[23px] leading-[19px]">
          <svg width="31" height="17" className="mr-0.5">
            <path d="M.5 4.500h8v8h-8z" fill="#fff" stroke="#888" />
            <path d="M2 8.500h5M4.500 6v5" stroke="#000" />
            <path d="M9 8.500h6" stroke="#888" strokeDasharray="1 1" />
            <path d="M15.500 13.500v-9l2-2h4l1 2h6v9z" fill="#f5c842" stroke="#9b7417" />
            <path d="M17.500 6.500h12v8h-11z" fill="#ffe98d" stroke="#9b7417" />
          </svg>
          Project Home
        </button>
      </div>
      <div className="flex h-[17px] shrink-0 bg-[#f4f4f4]">
        <button aria-label="Scroll left" className="flex w-[17px] items-center justify-center border border-black bg-[#f0f0f0]">
          <svg width="6" height="10"><path d="M6 0v10L0 5z" /></svg>
        </button>
        <div className="flex-1 border border-black bg-[#f0f0f0]" />
        <div className="w-[13px]" />
        <button aria-label="Scroll right" className="flex w-[17px] items-center justify-center border border-black bg-[#f0f0f0]">
          <svg width="6" height="10"><path d="M0 0v10l6-5z" /></svg>
        </button>
      </div>
      <div className="h-px" />
      <HSplit />
      <div className="border-b border-[#d0d0d0] bg-[#e1e1e1]">
        <MiniBar names={['gear', 'delete', 'sheet', 'sync']} />
      </div>
      <div className="h-[215px]" />
      <HSplit />
      <table className="w-full border border-black text-left">
        <thead>
          <tr className="h-[18px]">
            <th className="w-[71px] border-r border-black px-px font-normal">Property</th>
            <th className="px-0.5 font-normal">Value</th>
          </tr>
        </thead>
      </table>
    </aside>
  );
}

/* ---------- Status bar and taskbar ---------- */

const CELLS: [string, string, boolean?][] = [
  ['', 'w-[304px]'], ['1846.4, 2034.0', 'w-[185px]'], ['', 'w-[95px]'], ['Snap', 'w-[34px]'], ['Ortho', 'w-[35px]', true],
  ['FreeHand', 'w-14'], ['Verify Points', 'w-[71px]'], ['Record Mode: Point To Point', 'w-[144px]'],
];

function StatusBar() {
  return (
    <footer className="flex h-[23px] border-t border-[#4f80bd] bg-[linear-gradient(#dbe8fb_0%,#c3d9f7_40%,#adcaf3_45%,#d3e4fb_100%)] font-['Liberation_Sans',Arial,sans-serif] text-[11px] leading-5 text-[#1d4a94]">
      {CELLS.map(([text, w, on], i) => (
        <div key={i} className={clsx('shrink-0 whitespace-nowrap border-r border-[#6e97cf] pl-[3px]', w, on && 'bg-[linear-gradient(#a9c4ea,#7e9fd2)]')}>
          {text}
        </div>
      ))}
      <div className="flex-1 whitespace-nowrap px-[3px]">\Storages\Local\Jobs\Slab\Pages\GF-Lighting-Layout</div>
      <div className="w-[66px] border-x border-[#6e97cf] bg-[linear-gradient(#a9c4ea,#7e9fd2)] text-center">AutoScroll</div>
      <div className="w-[178px] pr-0.5 text-right">Network Status: Connected</div>
    </footer>
  );
}

const APPS: { name: string; icon: ReactNode; look?: string; line?: string }[] = [
  { name: 'Start', icon: <path d="m4 6 7-1v7H4zM12 5l8-1v8h-8zM4 13h7v7l-7-1zM12 13h8v8l-8-1z" fill="#000" /> },
  {
    name: 'Edge',
    icon: (
      <>
        <circle cx="12" cy="12" r="12" fill="#1b78d0" />
        <path d="M0 11Q2 0 13 0q10 1 11 10 0 6-7 6-3-1-2-4Q14 6 8 7 2 8 0 11" fill="#3fc9a0" />
        <path d="M10 9q-5 7 3 11 5 2 9-1-4 6-11 5Q0 21 3 12q3-5 7-3" fill="#1157a8" />
        <path d="M11 11q-2 7 7 8 5-1 5-4-3 2-6 1-3-1-2-4-2-3-4-1" fill="#e3eef6" />
      </>
    ),
  },
  {
    name: 'File Explorer',
    line: 'w-10 bg-[#1179d2]',
    icon: (
      <>
        <path d="M1 3h8l2 3h12v15H1z" fill="#f3b62b" />
        <path d="M1 8h22v13H1z" fill="#ffd968" />
        <path d="M5 22v-8h14v8h-4v-4H9v4z" fill="#2f8ad4" />
      </>
    ),
  },
  {
    name: 'OneNote',
    icon: (
      <>
        <path d="M6 1h18v22H6z" fill="#b96be0" />
        <path d="M18 7h6v6h-6z" fill="#9a41c8" />
        <path d="M0 5h15v15H0z" fill="#7a22a8" />
        <path d="M4.500 17V8l6 9V8" stroke="#fff" strokeWidth="2" fill="none" />
      </>
    ),
  },
  {
    name: 'Snip',
    icon: (
      <>
        <ellipse cx="12" cy="9" rx="9" ry="7" transform="rotate(-30 12 9)" fill="#f7eef0" stroke="#de5a5a" strokeWidth="2" />
        <path d="M9 5 19 18M4 13l14 1" stroke="#888" />
        <path d="M18 16a2 3 0 1 0 3 4 2 3 0 0 0-3-4m-5 2a2 3 0 1 0 2 5 2 3 0 0 0-2-5" fill="none" stroke="#2f7fc0" strokeWidth="2" />
      </>
    ),
  },
  {
    name: 'Sticky Notes',
    look: 'bg-[#f7b079]',
    line: 'w-full bg-[#ff6f00]',
    icon: (
      <>
        <path d="M1 1h22v13l-8 9H1z" fill="#3a3a3a" />
        <path d="M14 23V13h10z" fill="#ffe000" />
      </>
    ),
  },
  {
    name: 'Chrome',
    line: 'w-10 bg-[#1179d2]',
    icon: (
      <>
        <circle cx="12" cy="11" r="11" fill="#e0443a" />
        <path d="M2 6a11 11 0 0 0 9 16l5-9z" fill="#2da24f" />
        <path d="M22 7H12l5 8-5 7a11 11 0 0 0 10-15" fill="#fbc81c" />
        <circle cx="12" cy="11" r="5" fill="#4285f4" stroke="#fff" strokeWidth="1.500" />
        <circle cx="18" cy="18" r="6" fill="#6b6a58" />
        <circle cx="18" cy="16" r="3" fill="#d9ab8a" />
        <path d="M14 22q4-6 8 0-4 3-8 0" fill="#ddd" />
      </>
    ),
  },
  {
    name: 'Acrobat',
    line: 'w-10 bg-[#1179d2]',
    icon: (
      <>
        <rect x="1" y="1" width="22" height="22" rx="4" fill="#b20b00" />
        <path d="M6 18q5-5 6-12-2-1-1 2 3 7 7 7 1-2-3-1-6 1-9 4z" fill="none" stroke="#fff" strokeWidth="1.500" />
      </>
    ),
  },
  {
    name: 'PlanSwift',
    look: 'bg-[#eef3f8]',
    line: 'w-full bg-[#1179d2]',
    icon: (
      <>
        <circle cx="12" cy="12" r="11.500" fill="#d3d6da" stroke="#888" />
        <Logo x={3} y={7} s={0.95} />
      </>
    ),
  },
];

function Taskbar() {
  return (
    <div className="flex h-10 items-stretch bg-[linear-gradient(90deg,#d5e1ea,#d5dce8)] font-['Open_Sans',sans-serif] text-black">
      {APPS.map((a) => (
        <button key={a.name} aria-label={a.name} className={clsx('flex flex-col items-center', a.name === 'Start' ? 'w-[49px]' : 'w-[49px]', a.look)}>
          <svg width="24" height="24" viewBox="0 0 24 24" className="my-auto">{a.icon}</svg>
          <span className={clsx('h-0.5', a.line)} />
        </button>
      ))}
      <div className="flex-1" />
      <div className="flex items-center gap-2">
        <ChevronUp size={18} strokeWidth={2} />
        <svg width="14" height="14"><path d="M1 13Q2 2 13 1M4 13q1-8 9-9M7 13q1-4 6-6M10 13q0-3 3-3" fill="none" stroke="#222" strokeWidth="1.500" /></svg>
        <svg width="16" height="16"><path d="M1 6h3l4-4v12l-4-4H1z" fill="none" stroke="#222" /><path d="M10 6q1 2 0 4m2-6q3 4 0 8m2-10q4 6 0 12" fill="none" stroke="#222" /></svg>
        <div className="ml-1 text-center text-[11px] leading-[18px]">
          <div>4:49 PM</div>
          <div>4/26/2021</div>
        </div>
      </div>
      <button aria-label="Notifications" className="ml-4 mr-3.5 flex items-center">
        <svg width="28" height="28" viewBox="0 0 28 28">
          <path d="M2 4h15v12H9l-3 3v-3H2z" fill="#000" />
          <path d="M5 7.500h9m-9 3h9m-9 3h5" stroke="#dde4ec" />
          <circle cx="17" cy="18" r="8.500" fill="#cdd3da" stroke="#888" />
          <text x="17" y="22" fontSize="10" textAnchor="middle">13</text>
        </svg>
      </button>
    </div>
  );
}

export default function App() {
  return (
    <div className="min-h-screen bg-white font-['DejaVu_Sans_Condensed','Noto_Sans',sans-serif]">
      <Ribbon />
      <div className="flex bg-[#d3d3d3]">
        <LeftPanel />
        <VSplit />
        <Canvas />
        <VSplit />
        <RightPanel />
      </div>
      <StatusBar />
      <Taskbar />
    </div>
  );
}
